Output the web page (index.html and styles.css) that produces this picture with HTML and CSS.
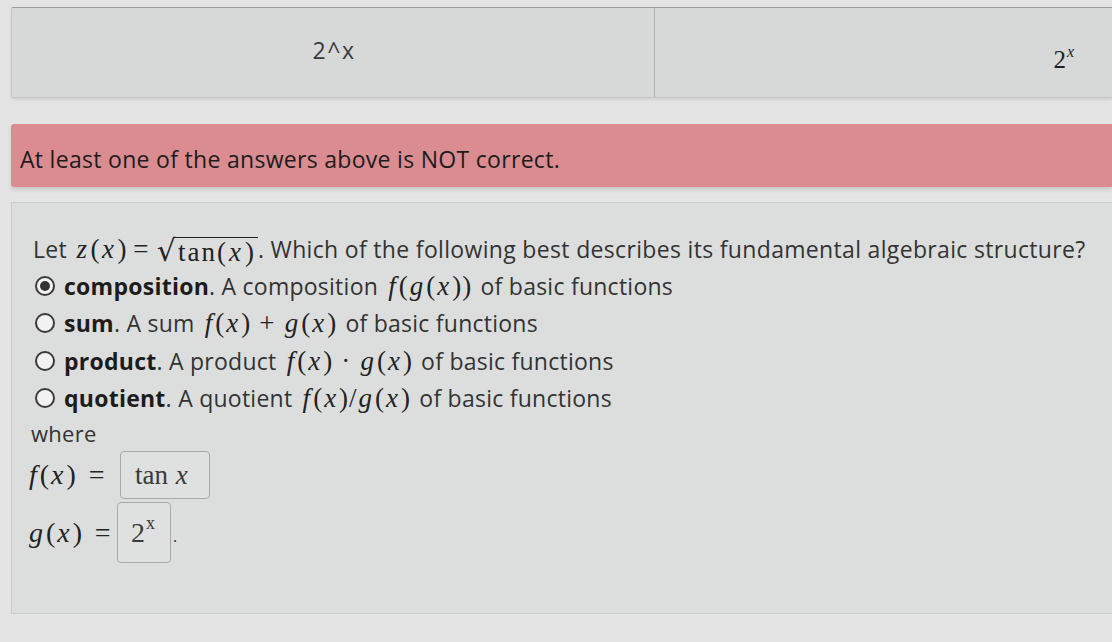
FILE: index.html
```html
<!DOCTYPE html>
<html>
<head>
<meta charset="utf-8">
<link rel="stylesheet" href="styles.css">
</head>
<body>
<div class="page">
  <div class="answer-table">
    <div class="cell cell-left"><span class="plain">2^x</span></div>
    <div class="cell cell-right"><span class="math">2<sup class="sup"><i>x</i></sup></span></div>
  </div>

  <div class="alert">At least one of the answers above is NOT correct.</div>

  <div class="question">
    <p class="prompt">Let <span class="math"><i>z</i>(<i>x</i>)<span class="op">=</span><span class="sqrt"><span class="radic">√</span><span class="radicand">tan(<i>x</i>)</span></span></span>. Which of the following best describes its fundamental algebraic structure?</p>
    <ul class="options">
      <li class="option"><span class="radio checked"></span><span class="txt"><b>composition</b>. A composition <span class="math"><i>f</i>(<i>g</i>(<i>x</i>))</span> of basic functions</span></li>
      <li class="option"><span class="radio"></span><span class="txt"><b>sum</b>. A sum <span class="math"><i>f</i>(<i>x</i>)<span class="op">+</span><i>g</i>(<i>x</i>)</span> of basic functions</span></li>
      <li class="option"><span class="radio"></span><span class="txt"><b>product</b>. A product <span class="math"><i>f</i>(<i>x</i>)<span class="op">·</span><i>g</i>(<i>x</i>)</span> of basic functions</span></li>
      <li class="option"><span class="radio"></span><span class="txt"><b>quotient</b>. A quotient <span class="math"><i>f</i>(<i>x</i>)/<i>g</i>(<i>x</i>)</span> of basic functions</span></li>
    </ul>
    <p class="where">where</p>
    <div class="defs">
      <div class="def"><span class="math lhs"><i>f</i>(<i>x</i>)<span class="op">=</span></span><span class="box box-f math"><span>tan <i>x</i></span></span></div>
      <div class="def"><span class="math lhs"><i>g</i>(<i>x</i>)<span class="op">=</span></span><span class="box box-g math"><span>2<sup class="sup2">x</sup></span></span><span class="dot">.</span></div>
    </div>
  </div>
</div>
</body>
</html>
```

FILE: styles.css
```css
html, body {
  margin: 0;
  padding: 0;
}
body {
  background: #e3e4e3;
  font-family: "Open Sans", "Noto Sans", sans-serif;
  color: #2a2a2a;
  width: 1112px;
  height: 642px;
  overflow: hidden;
}
.page {
  padding: 7px 0 0 11px;
}
.answer-table {
  display: grid;
  grid-template-columns: 643px 1fr;
  height: 89px;
  background: #d7d9d9;
  border-top: 1px solid #9a9c9c;
  border-left: 1px solid #c4c6c6;
  border-bottom: 1px solid #c4c6c6;
  border-radius: 2px 0 0 2px;
  box-shadow: 0 2px 3px rgba(0,0,0,0.08);
}
.cell {
  display: flex;
}
.cell-left {
  justify-content: center;
  align-items: flex-start;
  padding-top: 26px;
  border-right: 1px solid #aeb0b0;
}
.cell-left .plain {
  font-size: 23px;
  color: #3a3a3a;
  margin-left: 2px;
  letter-spacing: 1.5px;
}
.cell-right {
  justify-content: flex-end;
  align-items: flex-start;
  padding: 38px 36px 0 0;
}
.math {
  font-family: "Liberation Serif", "DejaVu Serif", serif;
  color: #222;
  white-space: nowrap;
  letter-spacing: 1px;
}
.math i {
  font-family: "Liberation Serif", "DejaVu Serif", serif;
  font-style: italic;
  padding: 0 2px 0 1px;
}
.op {
  margin: 0 0.3em;
}
.cell-right .math {
  font-size: 25px;
  letter-spacing: 0;
}
.sup {
  font-size: 16px;
  vertical-align: 11px;
  line-height: 0;
}
.alert {
  margin-top: 26px;
  height: 63px;
  background: #da8c91;
  color: #1c1c1c;
  font-size: 23px;
  letter-spacing: 0.3px;
  display: flex;
  align-items: center;
  padding: 6px 0 0 9px;
  box-sizing: border-box;
  border-radius: 3px 0 0 3px;
  box-shadow: 0 3px 4px rgba(0,0,0,0.12);
}
.question {
  margin-top: 15px;
  height: 412px;
  background: #dcdedd;
  border: 1px solid #cacccb;
  border-right: none;
  box-sizing: border-box;
  padding: 28px 0 0 21px;
  font-size: 23px;
  color: #333;
  letter-spacing: 0.25px;
}
.prompt {
  margin: 0;
  line-height: 36px;
  letter-spacing: 0.33px;
}
.prompt .math {
  font-size: 27px;
  margin-left: 2px;
  letter-spacing: 1.5px;
}
.prompt .op {
  margin: 0 0.25em 0 0.2em;
}
.sqrt {
  display: inline-flex;
  align-items: flex-end;
  vertical-align: -3px;
}
.radic {
  font-family: "DejaVu Sans", sans-serif;
  font-size: 30px;
  line-height: 32px;
  margin-right: -2px;
  letter-spacing: 0;
}
.radicand {
  border-top: 1.5px solid #222;
  padding: 0 2px 0 4px;
  line-height: 28px;
  margin-bottom: 1px;
  letter-spacing: 2px;
}
.options {
  list-style: none;
  margin: 0;
  padding: 0 0 0 2px;
}
.option {
  display: flex;
  align-items: center;
  height: 37.5px;
}
.txt {
  white-space: pre;
}
.option b {
  font-weight: 700;
  color: #1c1c1c;
}
.option .math {
  font-size: 27px;
  margin: 0 2px 0 3px;
}
.radio {
  width: 16px;
  height: 16px;
  border: 2px solid #3a3a3a;
  border-radius: 50%;
  margin-right: 9px;
  position: relative;
  flex: none;
  background: #f2f2f2;
}
.radio.checked::after {
  content: "";
  position: absolute;
  left: 3px;
  top: 3px;
  width: 10px;
  height: 10px;
  border-radius: 50%;
  background: #333;
}
.where {
  margin: 0 0 0 -2px;
  font-size: 22px;
  line-height: 32px;
}
.defs {
  display: flex;
  flex-direction: column;
  gap: 3px;
  margin-top: 2px;
  margin-left: -5px;
}
.def {
  display: flex;
  align-items: center;
}
.lhs {
  font-size: 28px;
  width: 92px;
  white-space: pre;
}
.lhs .op {
  margin: 0 0 0 0.42em;
}
.box {
  border: 1.5px solid #a8aaa9;
  border-radius: 4px;
  background: #dfe1e0;
  display: flex;
  align-items: center;
  box-sizing: border-box;
  font-size: 27px;
  color: #3a3a3a;
  letter-spacing: 0;
}
.box-f {
  width: 90px;
  height: 48px;
  padding-left: 14px;
  white-space: pre;
}
.box-g {
  width: 54px;
  height: 61px;
  padding-left: 13px;
  margin-left: -3px;
  font-size: 28px;
}
.sup2 {
  font-family: "Liberation Serif", serif;
  font-size: 18px;
  vertical-align: 13px;
  line-height: 0;
  margin-left: 1px;
}
.dot {
  font-size: 16px;
  margin-left: 2px;
  align-self: flex-end;
  margin-bottom: 16px;
}
```
